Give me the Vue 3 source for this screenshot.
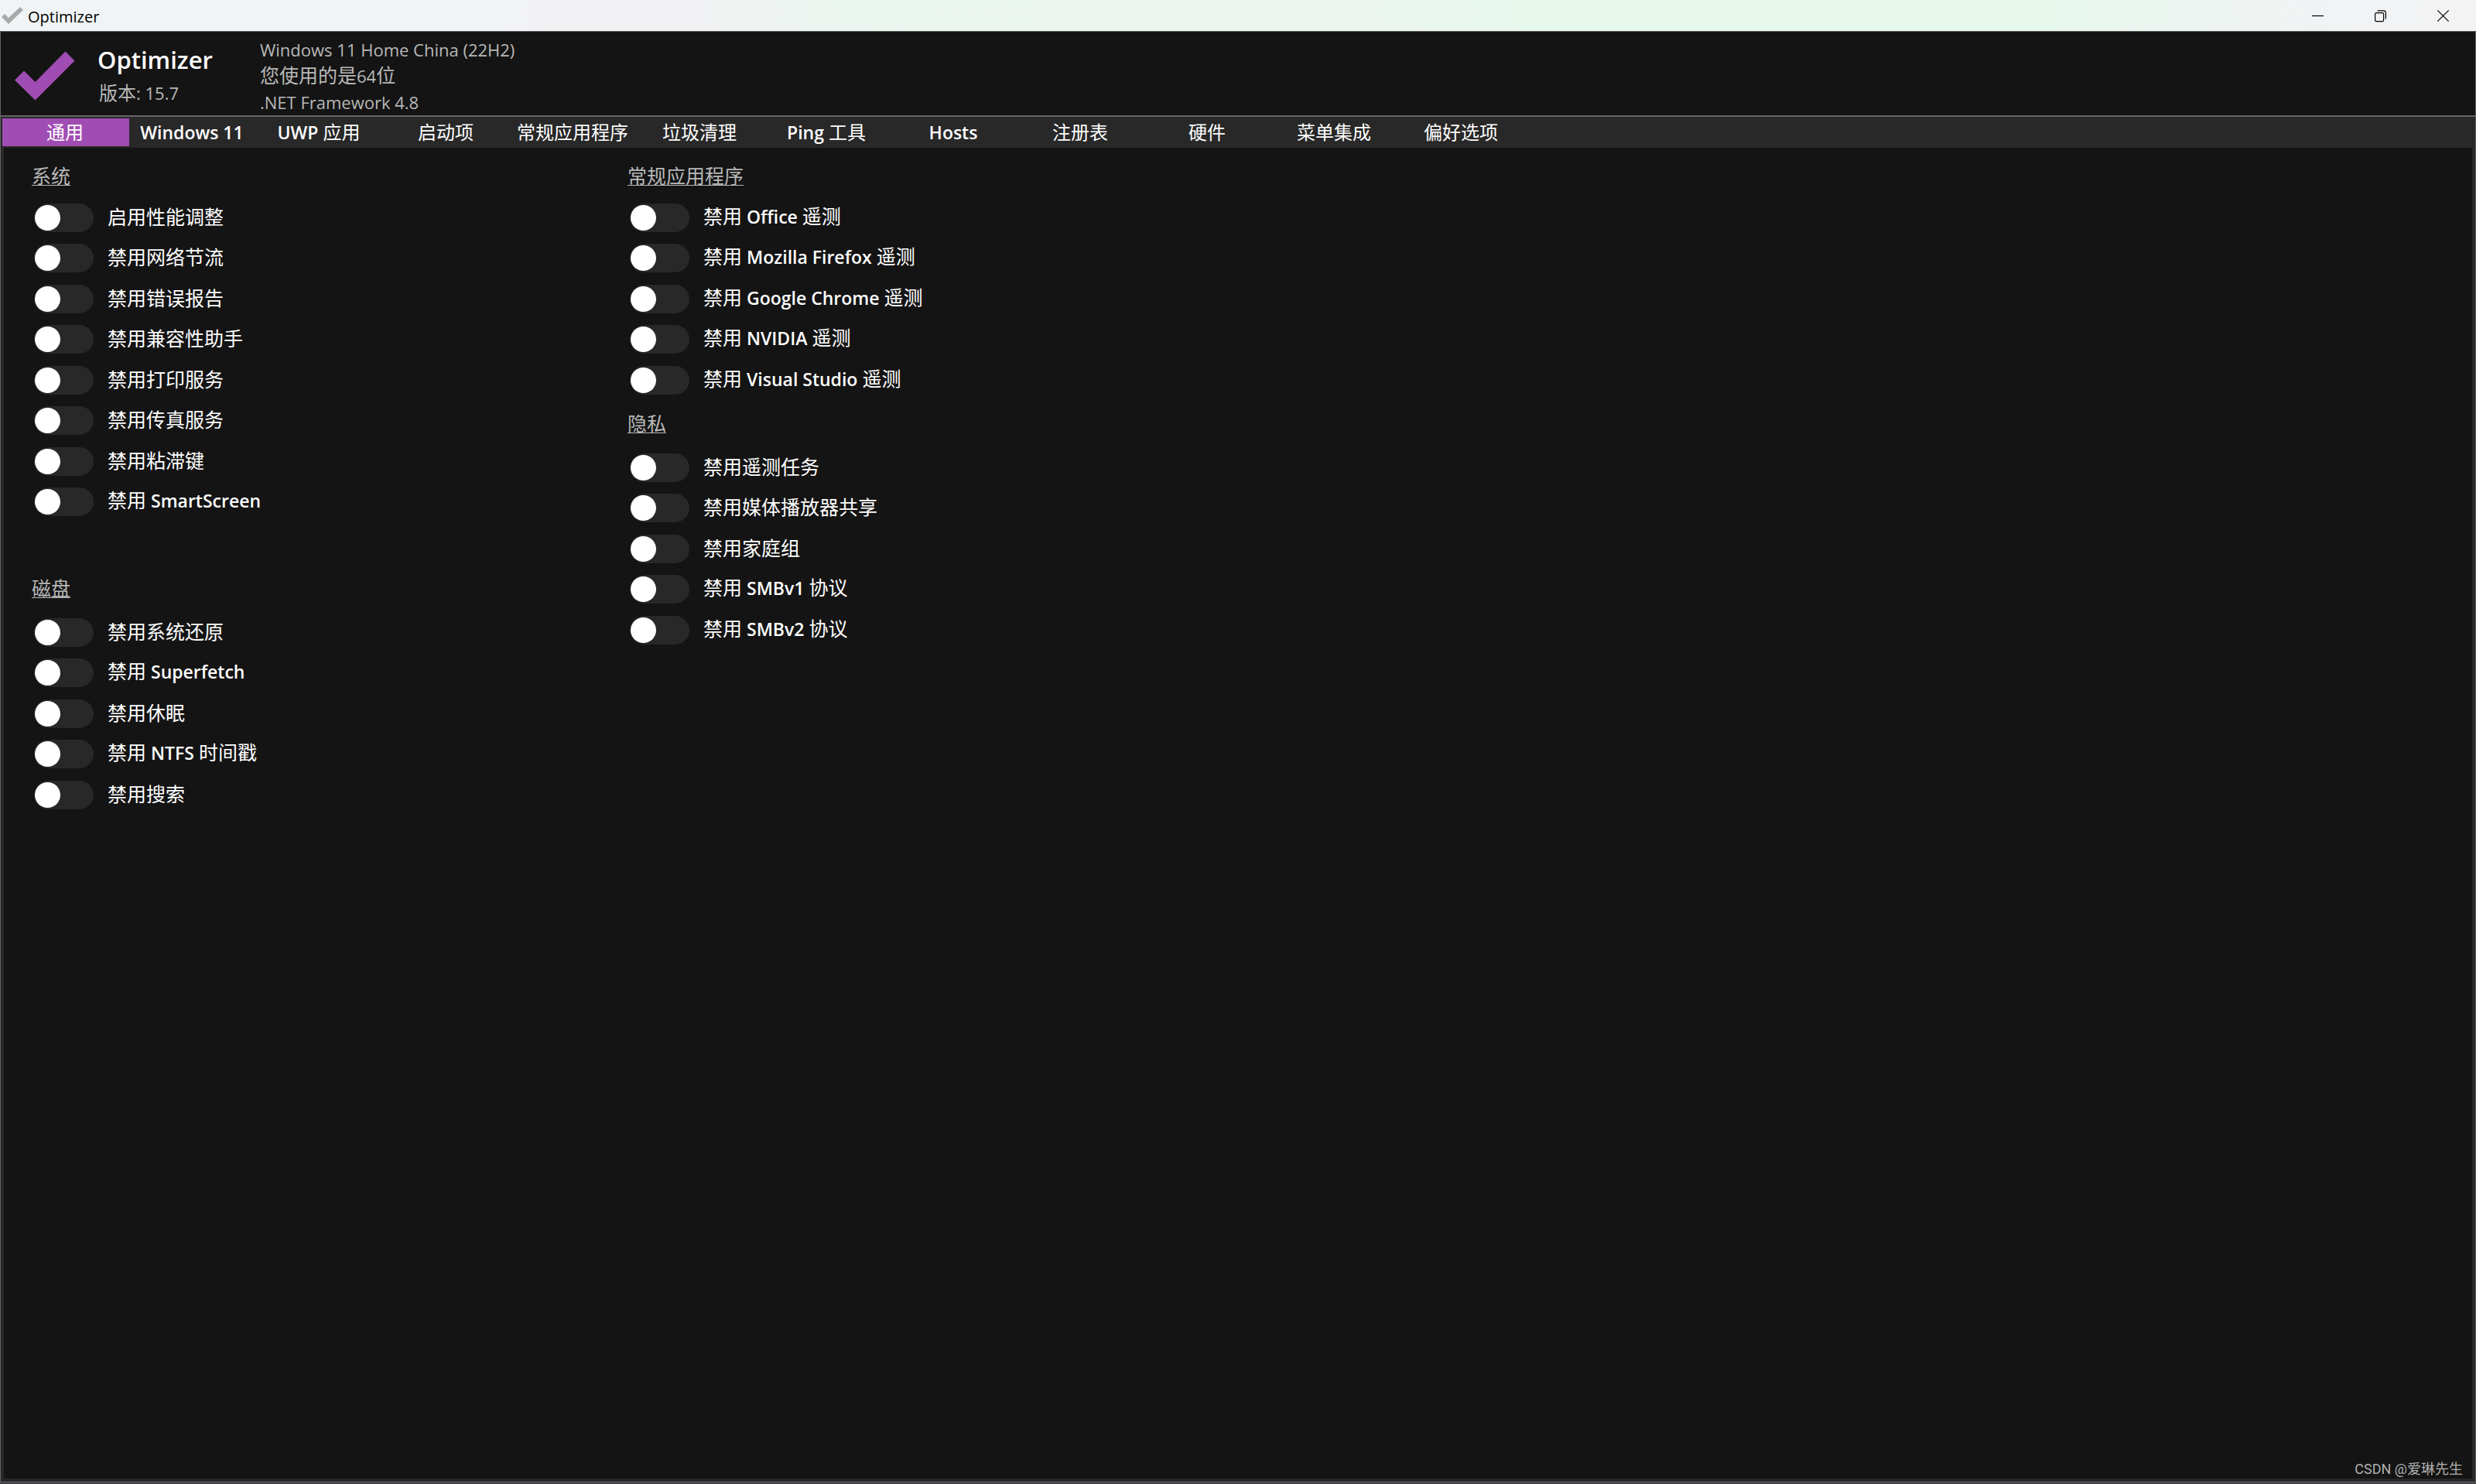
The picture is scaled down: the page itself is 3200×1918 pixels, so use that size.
<script setup>
import { ref } from 'vue'

const systemInfo = ['Windows 11 Home China (22H2)', '您使用的是64位', '.NET Framework 4.8']

const tabs = [
  '通用', 'Windows 11', 'UWP 应用', '启动项', '常规应用程序', '垃圾清理',
  'Ping 工具', 'Hosts', '注册表', '硬件', '菜单集成', '偏好选项',
]
const activeTab = ref('通用')

const option = (label) => ({ label, on: false })

const columns = ref([
  [
    {
      title: '系统',
      name: 'system',
      options: [
        '启用性能调整', '禁用网络节流', '禁用错误报告', '禁用兼容性助手',
        '禁用打印服务', '禁用传真服务', '禁用粘滞键', '禁用 SmartScreen',
      ].map(option),
    },
    {
      title: '磁盘',
      name: 'disk',
      options: ['禁用系统还原', '禁用 Superfetch', '禁用休眠', '禁用 NTFS 时间戳', '禁用搜索'].map(option),
    },
  ],
  [
    {
      title: '常规应用程序',
      name: 'apps',
      options: [
        '禁用 Office 遥测', '禁用 Mozilla Firefox 遥测', '禁用 Google Chrome 遥测',
        '禁用 NVIDIA 遥测', '禁用 Visual Studio 遥测',
      ].map(option),
    },
    {
      title: '隐私',
      name: 'privacy',
      options: ['禁用遥测任务', '禁用媒体播放器共享', '禁用家庭组', '禁用 SMBv1 协议', '禁用 SMBv2 协议'].map(option),
    },
  ],
])

// Latin runs are set heavier than the Chinese around them
const runs = (text) =>
  text
    .split(/([\x20-\x7e]+)/)
    .filter(Boolean)
    .map((part) => ({ part, latin: /^[\x20-\x7e]/.test(part) }))
</script>

<template>
  <div class="window">
    <header class="titlebar">
      <svg class="app-icon" viewBox="0 0 32 40" aria-hidden="true">
        <path d="M2 22 6 18 11 23 26 9 30 13 11 31Z" fill="#aaaaaa" />
      </svg>
      <span class="app-name">Optimizer</span>
      <div class="window-buttons">
        <button type="button" aria-label="最小化">
          <svg viewBox="0 0 15 15"><path d="M0 7.5H15" /></svg>
        </button>
        <button type="button" aria-label="还原">
          <svg viewBox="0 0 15 15">
            <rect x=".6" y="3.6" width="11" height="11" rx="1.6" />
            <path d="M3.5 .8H11.5Q14.4 .8 14.4 3.6V11.5" />
          </svg>
        </button>
        <button type="button" aria-label="关闭">
          <svg viewBox="0 0 15 15"><path d="M.3 .3 14.7 14.7M14.7 .3 .3 14.7" /></svg>
        </button>
      </div>
    </header>

    <div class="frame">
      <section class="banner">
        <svg class="logo" viewBox="0 0 78 64" aria-hidden="true">
          <path d="M0 37.5 12 25.5 26.5 40 65.5 .5 77.5 12.5 26.5 63.5Z" fill="#a04db3" />
        </svg>
        <div class="product">
          <h1>Optimizer</h1>
          <p>
            <span v-for="(r, i) in runs('版本: 15.7')" :key="i" :class="{ latin: r.latin }">{{ r.part }}</span>
          </p>
        </div>
        <div class="info">
          <p v-for="line in systemInfo" :key="line">
            <span v-for="(r, i) in runs(line)" :key="i" :class="{ latin: r.latin }">{{ r.part }}</span>
          </p>
        </div>
      </section>

      <nav class="tabs">
        <button
          v-for="tab in tabs"
          :key="tab"
          type="button"
          :class="{ active: tab === activeTab }"
          @click="activeTab = tab"
        >
          <span v-for="(r, i) in runs(tab)" :key="i" :class="{ latin: r.latin }">{{ r.part }}</span>
        </button>
      </nav>

      <main class="page">
        <div v-for="(groups, c) in columns" :key="c" class="column">
          <section v-for="group in groups" :key="group.name" class="group" :class="group.name">
            <h2><a href="#">{{ group.title }}</a></h2>
            <ul>
              <li v-for="opt in group.options" :key="opt.label">
                <label>
                  <input v-model="opt.on" type="checkbox" />
                  <span class="text"><span v-for="(r, i) in runs(opt.label)" :key="i" :class="{ latin: r.latin }">{{ r.part }}</span></span>
                </label>
              </li>
            </ul>
          </section>
        </div>
        <p class="credit">CSDN @爱琳先生</p>
      </main>
    </div>
  </div>
</template>

<style>
body {
  margin: 0;
  background: #141414;
}
</style>

<style scoped>
.window {
  display: flex;
  flex-direction: column;
  min-height: 100vh;
  box-sizing: border-box;
  border-bottom: 2px solid #3f3f43;
  background: #141414;
  color: #ffffff;
  font-family: "Open Sans", "Noto Sans CJK SC", sans-serif;
  font-size: 25px;
}

h1, h2, p, ul {
  margin: 0;
  padding: 0;
  font-weight: 400;
}

button {
  margin: 0;
  padding: 0;
  border: 0;
  background: none;
  color: inherit;
  font: inherit;
}

.latin {
  font-size: 23px;
  font-weight: 600;
  white-space: pre;
}

.banner .latin {
  font-size: 22px;
  font-weight: 500;
}

.titlebar {
  display: flex;
  align-items: center;
  height: 40px;
  padding-right: 2px;
  background: linear-gradient(
    90deg,
    #f0f4f6 0%, #f0f4f6 19%, #f2f2f5 22%, #f2f2f4 28%, #ebf5ef 34%,
    #ebf5ee 55%, #e6f8ec 63%, #e6f8ec 82%, #eef4f2 90%, #f1f3f5 95%, #f3f3f3 100%
  );
  color: #000000;
}

.app-icon {
  width: 32px;
  height: 40px;
  margin-right: 4px;
}

.app-name {
  padding-top: 2px;
  font-size: 20px;
}

.window-buttons {
  display: flex;
  margin-left: auto;
}

.window-buttons button {
  display: flex;
  align-items: center;
  justify-content: center;
  width: 81px;
  height: 39px;
}

.window-buttons svg {
  width: 15px;
  height: 15px;
  overflow: visible;
  fill: none;
  stroke: #000000;
  stroke-width: 1.2;
}

.frame {
  display: flex;
  flex: 1;
  flex-direction: column;
  border: 1px solid #646464;
}

.banner {
  display: flex;
  height: 108px;
  border-bottom: 2px solid #646464;
}

.logo {
  width: 78px;
  height: 64px;
  margin: 25px 29px 0 18px;
}

.product {
  width: 210px;
}

.product h1 {
  padding-top: 16px;
  font-size: 31px;
  font-weight: 600;
  line-height: 40px;
}

.product p {
  padding: 6px 0 0 2px;
  color: #b8b8b8;
  font-size: 24px;
  line-height: 34px;
}

.info {
  padding-top: 5px;
  color: #b8b8b8;
  line-height: 34px;
}

.info p {
  height: 34px;
}

.tabs {
  display: flex;
  padding: 2px;
  background: #282828;
}

.tabs button {
  width: 164px;
  height: 36px;
  padding-right: 2px;
  font-size: 24px;
  line-height: 36px;
  white-space: nowrap;
}

.tabs .active {
  background: #a04db3;
}

.page {
  position: relative;
  display: flex;
  flex: 1;
  border: 4px solid #282828;
  border-top: 0;
}

.column {
  width: 770px;
  padding: 18px 0 0 36px;
  box-sizing: border-box;
}

h2 {
  font-size: 25px;
  line-height: 36px;
}

h2 a {
  color: #b8b8b8;
  text-decoration: underline;
  text-decoration-thickness: 1px;
  text-underline-offset: 2px;
}

ul {
  padding: 18px 0 0 3px;
  list-style: none;
}

li {
  height: 37px;
  margin-bottom: 15px;
}

li:nth-child(even) {
  margin-bottom: 16px;
}

.privacy {
  padding-top: 4px;
}

.disk {
  padding-top: 59px;
}

.group + .group ul {
  padding-top: 21px;
}

label {
  display: flex;
  align-items: center;
  height: 37px;
}

.text {
  line-height: 36px;
  padding-bottom: 4px;
}

input {
  width: 77px;
  height: 37px;
  margin: 0 18px 0 0;
  padding: 2px 1px;
  box-sizing: border-box;
  appearance: none;
  border-radius: 19px;
  background: #282828;
}

input::before {
  display: block;
  width: 33px;
  height: 33px;
  border-radius: 50%;
  background: #ffffff;
  content: "";
}

input:checked {
  background: #a04db3;
}

input:checked::before {
  margin-left: auto;
}

.credit {
  position: absolute;
  right: 12px;
  bottom: 0;
  color: #b0b0b0;
  font-family: Roboto, "Noto Sans CJK SC", sans-serif;
  font-size: 18px;
  line-height: 24px;
}
</style>
